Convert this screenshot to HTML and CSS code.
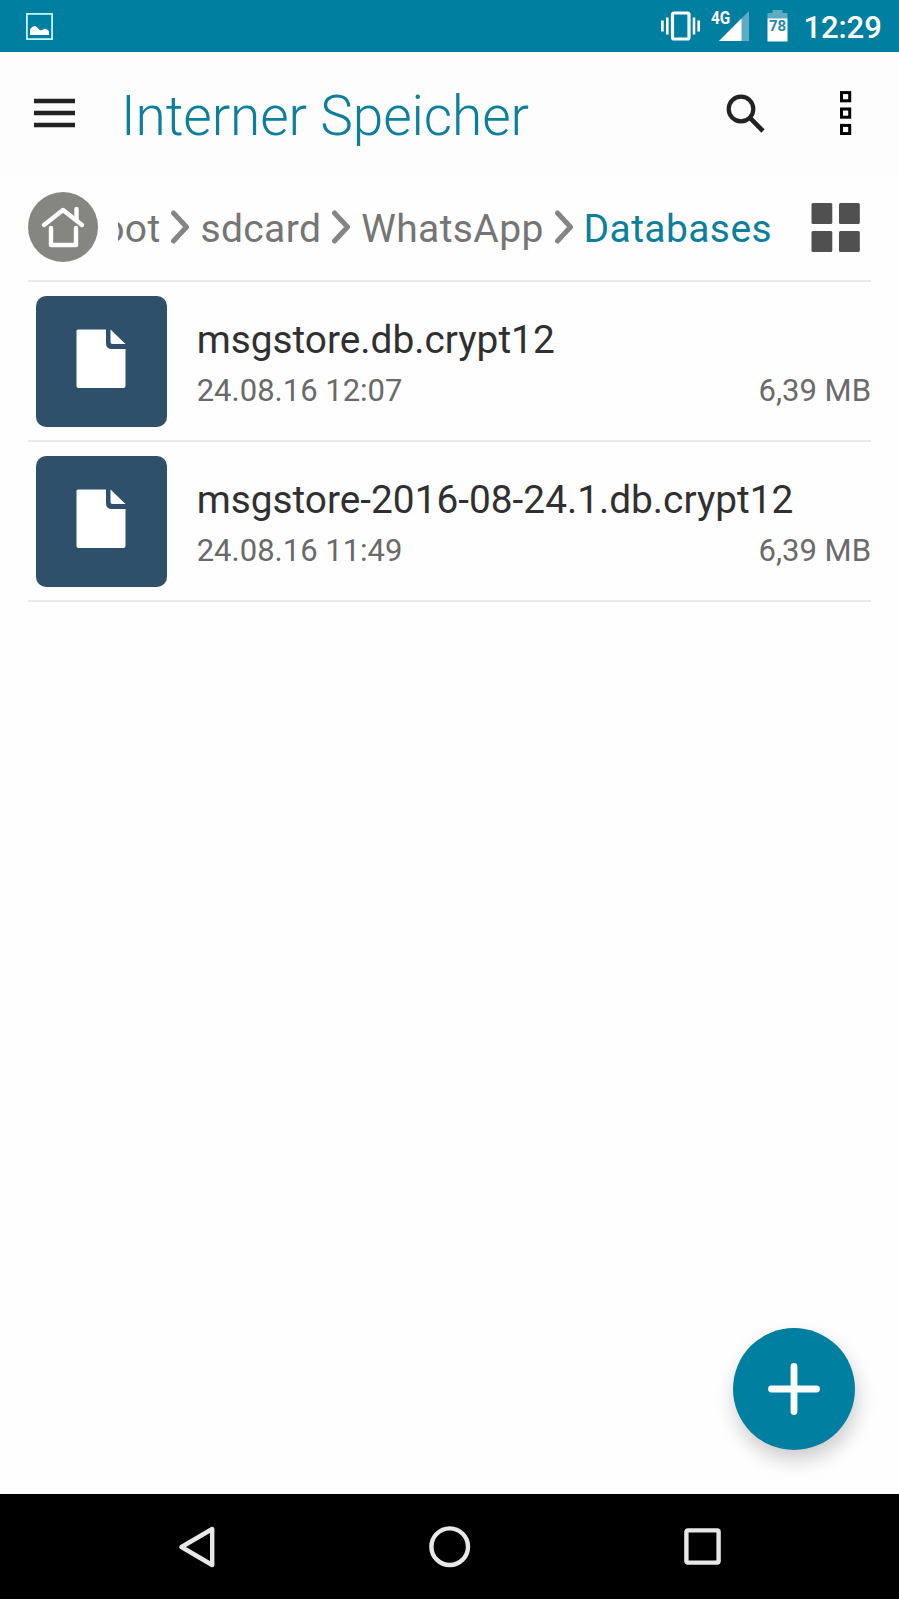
FILE: index.html
```html
<!DOCTYPE html>
<html lang="de">
<head>
    <meta charset="UTF-8">
    <meta name="viewport" content="width=device-width, initial-scale=1.0">
    <title>Interner Speicher</title>
    <link rel="stylesheet" href="styles.css">
</head>
<body>
    <!-- Status bar -->
    <div class="status-bar">
        <svg class="picture-icon" width="27" height="27" viewBox="0 0 27 27">
            <rect x="0.9" y="0.9" width="25.2" height="25.2" fill="none" stroke="#c9f3fa" stroke-width="1.8"/>
            <path d="M4 22V16.5Q5 14.5 6.5 14Q8.5 12 10.5 13.8L14 17.3Q16 17.5 18 15.8Q20 15.5 21.5 17Q23 17.5 23 19V22Z" fill="#fff"/>
        </svg>
        <svg class="vibrate-icon" width="39" height="30" viewBox="0 0 39 30">
            <rect x="11.5" y="2" width="16.5" height="26" rx="1.5" fill="none" stroke="#fff" stroke-width="3.2"/>
            <path d="M1.4 9.5V20.5M6.3 6.5V23.5M33 6.5V23.5M37.7 9.5V20.5" stroke="#fff" stroke-width="2.6"/>
        </svg>
        <div class="signal">
            <span class="network">4G</span>
            <svg width="30" height="30" viewBox="0 0 30 30">
                <path d="M0 30L30 0V30Z" fill="#5fabc3"/>
                <path d="M0 30L22.5 7.5V30Z" fill="#fff"/>
            </svg>
        </div>
        <div class="battery">
            <svg width="21" height="32" viewBox="0 0 21 32">
                <path d="M0.5 3H5.5V0H15.5V3H20.5V9H0.5Z" fill="#5fabc3"/>
                <rect x="0.5" y="8.5" width="20" height="23" fill="#fff"/>
            </svg>
            <span class="level">78</span>
        </div>
        <div class="clock">12:29</div>
    </div>

    <!-- App bar -->
    <div class="app-bar">
        <svg class="menu-icon" width="42" height="30" viewBox="0 0 42 30">
            <path d="M0 3H41M0 15H41M0 27H41" stroke="#222" stroke-width="4.4"/>
        </svg>
        <h1 class="title">Interner Speicher</h1>
        <svg class="search-icon" width="40" height="40" viewBox="0 0 40 40">
            <circle cx="15" cy="15" r="12.3" fill="none" stroke="#222" stroke-width="4.2"/>
            <path d="M24.2 24.2L37 37" stroke="#222" stroke-width="4.6"/>
        </svg>
        <svg class="more-icon" width="12" height="44" viewBox="0 0 12 44">
            <g fill="#fff" stroke="#000" stroke-width="3">
                <rect x="1.5" y="1.6" width="8.2" height="8.2"/>
                <rect x="1.5" y="18" width="8.2" height="8.2"/>
                <rect x="1.5" y="34.4" width="8.2" height="8.2"/>
            </g>
        </svg>
    </div>

    <!-- Path -->
    <div class="path-bar">
        <svg class="home-icon" width="70" height="70" viewBox="0 0 70 70">
            <circle cx="35" cy="35" r="35" fill="#858582"/>
            <g fill="none" stroke="#fff" stroke-width="4.4" stroke-linecap="round" stroke-linejoin="round">
                <path d="M16 33L35 18L54 33"/>
                <path d="M23 36V53H48V36"/>
                <path d="M48.5 17V28"/>
            </g>
        </svg>
        <div class="crumbs">
            <span class="crumb">root</span>
            <svg class="chevron" width="18" height="34" viewBox="0 0 18 34"><path d="M2.5 3L15.5 17L2.5 31"/></svg>
            <span class="crumb">sdcard</span>
            <svg class="chevron" width="18" height="34" viewBox="0 0 18 34"><path d="M2.5 3L15.5 17L2.5 31"/></svg>
            <span class="crumb">WhatsApp</span>
            <svg class="chevron" width="18" height="34" viewBox="0 0 18 34"><path d="M2.5 3L15.5 17L2.5 31"/></svg>
            <span class="crumb current">Databases</span>
        </div>
        <svg class="grid-icon" width="49" height="49" viewBox="0 0 49 49">
            <g fill="#505050">
                <rect x="0.5" y="0" width="20.8" height="21" rx="1.5"/>
                <rect x="28" y="0" width="20.8" height="21" rx="1.5"/>
                <rect x="0.5" y="28" width="20.8" height="21" rx="1.5"/>
                <rect x="28" y="28" width="20.8" height="21" rx="1.5"/>
            </g>
        </svg>
    </div>

    <!-- Files -->
    <div class="content">
        <div class="file">
            <div class="thumb">
                <svg width="50" height="60" viewBox="0 0 50 60">
                    <path d="M2 0.5H30V14Q30 20 36 20H49.5V57Q49.5 59 47.5 59H2.5Q0.5 59 0.5 57V2Q0.5 0.5 2 0.5Z" fill="#fff"/>
                    <path d="M34.5 0.5L49.5 15H36.5Q34.5 15 34.5 13Z" fill="#fff"/>
                </svg>
            </div>
            <div class="info">
                <div class="name">msgstore.db.crypt12</div>
                <div class="meta"><span>24.08.16 12:07</span><span>6,39 MB</span></div>
            </div>
        </div>
        <div class="file">
            <div class="thumb">
                <svg width="50" height="60" viewBox="0 0 50 60">
                    <path d="M2 0.5H30V14Q30 20 36 20H49.5V57Q49.5 59 47.5 59H2.5Q0.5 59 0.5 57V2Q0.5 0.5 2 0.5Z" fill="#fff"/>
                    <path d="M34.5 0.5L49.5 15H36.5Q34.5 15 34.5 13Z" fill="#fff"/>
                </svg>
            </div>
            <div class="info">
                <div class="name">msgstore-2016-08-24.1.db.crypt12</div>
                <div class="meta"><span>24.08.16 11:49</span><span>6,39 MB</span></div>
            </div>
        </div>

        <div class="fab">
            <svg width="52" height="52" viewBox="0 0 52 52">
                <path d="M26 3.5V48.5M3.5 26H48.5" stroke="#fff" stroke-width="6.8" stroke-linecap="round"/>
            </svg>
        </div>
    </div>

    <!-- Navigation bar -->
    <div class="nav-bar">
        <svg width="42" height="42" viewBox="0 0 42 42"><path d="M5.5 21L36.2 3V39Z"/></svg>
        <svg width="42" height="42" viewBox="0 0 42 42"><circle cx="20.7" cy="20.7" r="18.3"/></svg>
        <svg width="42" height="42" viewBox="0 0 42 42"><rect x="4.4" y="4.4" width="32.2" height="32.2" rx="1.5"/></svg>
    </div>
</body>
</html>
```
FILE: styles.css
```css
* {
    box-sizing: border-box;
}
body {
    margin: 0;
    height: 1599px;
    display: flex;
    flex-direction: column;
    font-family: Roboto, sans-serif;
    background: #fefefe;
    overflow: hidden;
}
svg {
    display: block;
    flex: none;
}
.status-bar {
    height: 52px;
    display: flex;
    align-items: flex-start;
    background: #007fa1;
    color: #fff;
}
.picture-icon {
    margin: 13px 0 0 26px;
}
.vibrate-icon {
    margin: 11px 0 0 auto;
}
.signal {
    position: relative;
    margin: 11px 0 0 19px;
}
.network {
    position: absolute;
    left: -8px;
    top: -2px;
    font-size: 18px;
    line-height: 18px;
    font-weight: 700;
    transform: scaleX(0.85);
    transform-origin: left;
}
.battery {
    position: relative;
    margin: 10px 0 0 18px;
}
.level {
    position: absolute;
    left: 0;
    top: 9px;
    width: 21px;
    text-align: center;
    font-size: 15px;
    line-height: 15px;
    font-weight: 700;
    color: #2787a6;
}
.clock {
    width: 78px;
    margin: 10px 17.5px 0 15.5px;
    font-size: 31px;
    line-height: 36px;
    font-weight: 500;
    letter-spacing: -0.1px;
    white-space: nowrap;
}
.app-bar {
    height: 123px;
    display: flex;
    align-items: flex-start;
    background: #fdfdfd;
}
.menu-icon {
    margin: 46px 0 0 33.5px;
}
.title {
    flex: 1;
    margin: 31.5px 0 0 45.5px;
    font-size: 55px;
    line-height: 64px;
    font-weight: 300;
    letter-spacing: -0.1px;
    color: #0c7f9c;
    white-space: nowrap;
}
.search-icon {
    margin: 42px 0 0;
}
.more-icon {
    margin: 39px 47px 0 74px;
}
.path-bar {
    height: 105px;
    display: flex;
    align-items: flex-start;
    padding: 0 38px 0 28px;
}
.home-icon {
    margin-top: 17px;
}
.crumbs {
    width: 654px;
    height: 64px;
    margin: 20px 39px 0 20px;
    display: flex;
    justify-content: flex-end;
    align-items: center;
    overflow: hidden;
    font-size: 39px;
    line-height: 60px;
    letter-spacing: 0.4px;
    color: #757575;
}
.crumb {
    padding-top: 4px;
    white-space: nowrap;
}
.chevron {
    margin: 0 10.9px;
    fill: none;
    stroke: #858585;
    stroke-width: 5;
    stroke-linecap: round;
    stroke-linejoin: round;
}
.current {
    color: #0c7f9c;
}
.grid-icon {
    margin-top: 28px;
}
.content {
    position: relative;
    flex: 1;
    margin: 0 28px;
    border-top: 2px solid #e9e9e9;
}
.file {
    height: 160px;
    display: flex;
    padding: 13.5px 0 0 8px;
    border-bottom: 2px solid #e9e9e9;
}
.thumb {
    width: 131px;
    height: 131px;
    padding: 33px 0 0 40px;
    border-radius: 10px;
    background: #2e506b;
}
.info {
    flex: 1;
    margin-left: 29.7px;
}
.name {
    margin-top: 21px;
    font-size: 38.8px;
    line-height: 46px;
    color: #303030;
    white-space: nowrap;
}
.meta {
    display: flex;
    justify-content: space-between;
    margin-top: 10.5px;
    font-size: 31px;
    line-height: 36px;
    color: #6a6a6a;
}
.fab {
    position: absolute;
    right: 16px;
    bottom: 44px;
    width: 122px;
    height: 122px;
    display: flex;
    align-items: center;
    justify-content: center;
    border-radius: 50%;
    background: #007fa1;
    box-shadow: 2px 10px 20px rgba(0,0,0,0.2);
}
.nav-bar {
    height: 105px;
    display: flex;
    align-items: center;
    justify-content: center;
    gap: 211px;
    background: #000;
}
.nav-bar svg {
    fill: none;
    stroke: #e8e8e8;
    stroke-width: 4.4;
    stroke-linejoin: round;
}
```
